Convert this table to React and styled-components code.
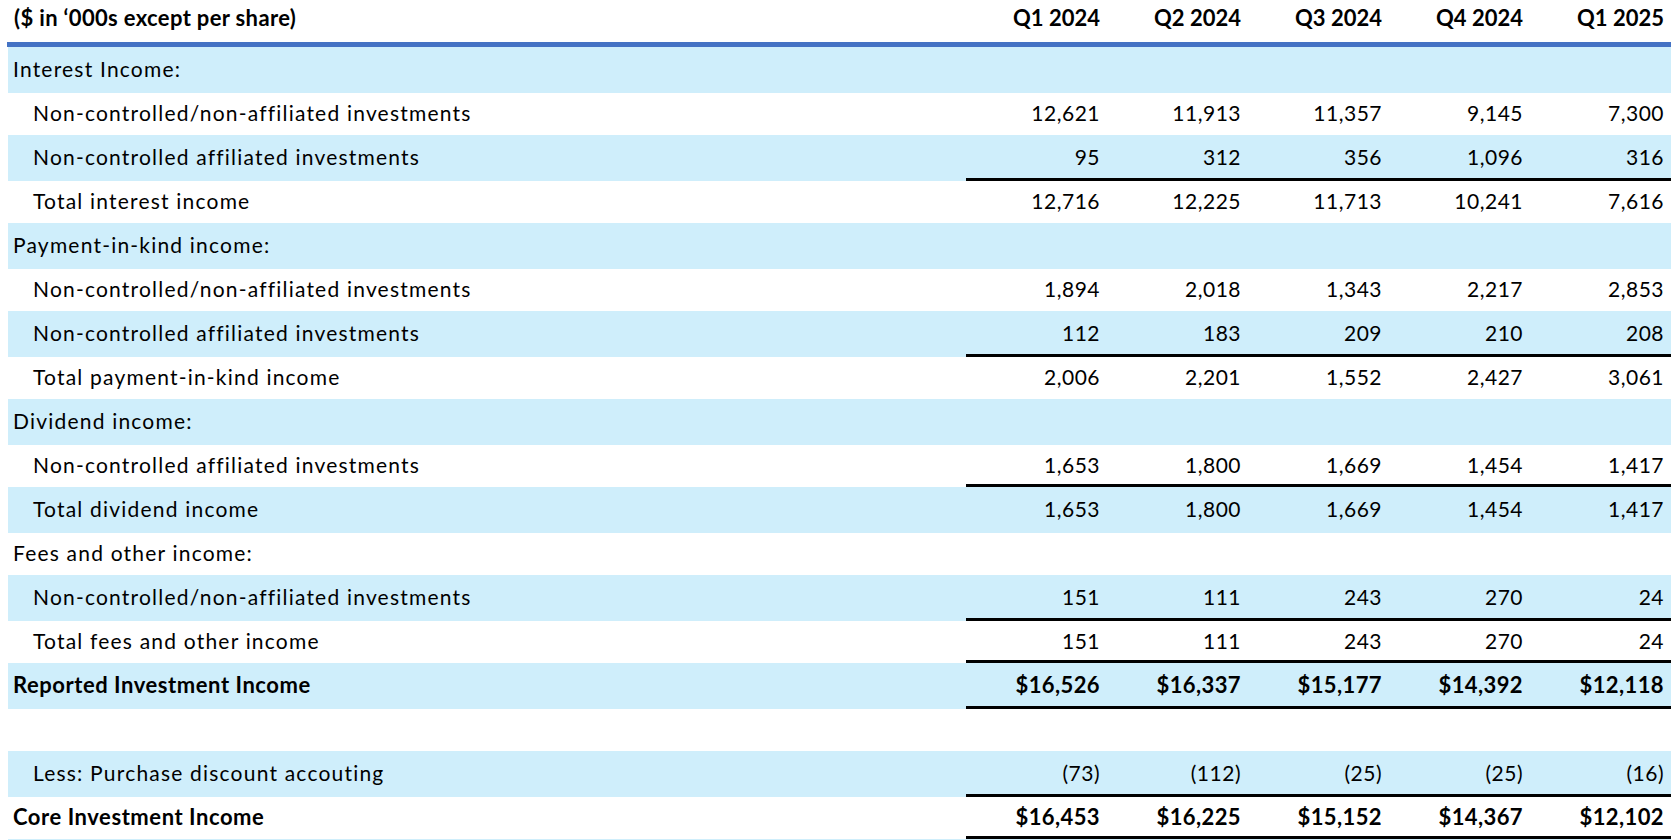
import React from "react";
import styled, { createGlobalStyle } from "styled-components";

const GlobalStyle = createGlobalStyle`
  html, body {
    margin: 0;
    padding: 0;
    background: #ffffff;
    overflow: hidden;
  }
  body {
    font-family: Lato, "Liberation Sans", Arial, sans-serif;
    color: #000;
  }
`;

const Page = styled.div`
  width: 1674px;
  height: 840px;
  overflow: hidden;
  background: #fff;
`;

const Table = styled.div`
  margin-left: 8px;
  width: 1663px;
`;

const HeaderRow = styled.div`
  display: grid;
  grid-template-columns: 1fr repeat(5, 141px);
  height: 42px;
  box-sizing: border-box;
  padding-bottom: 7px;
  align-items: center;
  font-weight: 700;
  font-size: 22px;
`;

const TopRule = styled.div`
  height: 5px;
  margin-left: -1px;
  background: #4472c4;
`;

const Row = styled.div`
  display: grid;
  grid-template-columns: 1fr repeat(5, 141px);
  height: ${(p) => (p.$shaded ? 46 : 42)}px;
  background: ${(p) => (p.$shaded ? "#cfeefb" : "#ffffff")};
  font-size: ${(p) => (p.$bold ? 22 : 21)}px;
  font-weight: ${(p) => (p.$bold ? 700 : 400)};
`;

const Label = styled.div`
  display: flex;
  align-items: center;
  box-sizing: border-box;
  padding-bottom: 4px;
  padding-left: ${(p) => (p.$indent ? 25 : 5)}px;
  letter-spacing: ${(p) => (p.$bold ? 0.55 : 1.2)}px;
  white-space: nowrap;
`;

const HeadLabel = styled.div`
  padding-left: 6px;
  letter-spacing: 0.35px;
  white-space: nowrap;
`;

const Num = styled.div`
  display: flex;
  align-items: center;
  justify-content: flex-end;
  padding-right: 7px;
  padding-bottom: ${(p) => (p.$rule ? 1 : 4)}px;
  box-sizing: border-box;
  letter-spacing: ${(p) => (p.$bold ? 0.4 : 0.5)}px;
  border-bottom: ${(p) => (p.$rule ? "3px solid #000" : "0")};
  white-space: nowrap;
`;

const HeadNum = styled.div`
  text-align: right;
  padding-right: 7px;
  white-space: nowrap;
`;

const quarters = ["Q1 2024", "Q2 2024", "Q3 2024", "Q4 2024", "Q1 2025"];

const rows = [
  { label: "Interest Income:" },
  {
    label: "Non-controlled/non-affiliated investments",
    indent: true,
    values: ["12,621", "11,913", "11,357", "9,145", "7,300"],
  },
  {
    label: "Non-controlled affiliated investments",
    indent: true,
    values: ["95", "312", "356", "1,096", "316"],
    rule: true,
  },
  {
    label: "Total interest income",
    indent: true,
    values: ["12,716", "12,225", "11,713", "10,241", "7,616"],
  },
  { label: "Payment-in-kind income:" },
  {
    label: "Non-controlled/non-affiliated investments",
    indent: true,
    values: ["1,894", "2,018", "1,343", "2,217", "2,853"],
  },
  {
    label: "Non-controlled affiliated investments",
    indent: true,
    values: ["112", "183", "209", "210", "208"],
    rule: true,
  },
  {
    label: "Total payment-in-kind income",
    indent: true,
    values: ["2,006", "2,201", "1,552", "2,427", "3,061"],
  },
  { label: "Dividend income:" },
  {
    label: "Non-controlled affiliated investments",
    indent: true,
    values: ["1,653", "1,800", "1,669", "1,454", "1,417"],
    rule: true,
  },
  {
    label: "Total dividend income",
    indent: true,
    values: ["1,653", "1,800", "1,669", "1,454", "1,417"],
  },
  { label: "Fees and other income:" },
  {
    label: "Non-controlled/non-affiliated investments",
    indent: true,
    values: ["151", "111", "243", "270", "24"],
    rule: true,
  },
  {
    label: "Total fees and other income",
    indent: true,
    values: ["151", "111", "243", "270", "24"],
    rule: true,
  },
  {
    label: "Reported Investment Income",
    bold: true,
    values: ["$16,526", "$16,337", "$15,177", "$14,392", "$12,118"],
    rule: true,
  },
  { label: "" },
  {
    label: "Less: Purchase discount accouting",
    indent: true,
    values: ["(73)", "(112)", "(25)", "(25)", "(16)"],
    rule: true,
  },
  {
    label: "Core Investment Income",
    bold: true,
    values: ["$16,453", "$16,225", "$15,152", "$14,367", "$12,102"],
    rule: true,
  },
  { label: "" },
];

export default function App() {
  return (
    <Page>
      <GlobalStyle />
      <Table>
        <HeaderRow>
          <HeadLabel>($ in ‘000s except per share)</HeadLabel>
          {quarters.map((q) => (
            <HeadNum key={q}>{q}</HeadNum>
          ))}
        </HeaderRow>
        <TopRule />
        {rows.map((r, i) => (
          <Row key={i} $shaded={i % 2 === 0} $bold={r.bold}>
            <Label $indent={r.indent} $bold={r.bold}>
              {r.label}
            </Label>
            {(r.values || ["", "", "", "", ""]).map((v, j) => (
              <Num key={j} $rule={r.rule} $bold={r.bold}>
                {v}
              </Num>
            ))}
          </Row>
        ))}
      </Table>
    </Page>
  );
}
